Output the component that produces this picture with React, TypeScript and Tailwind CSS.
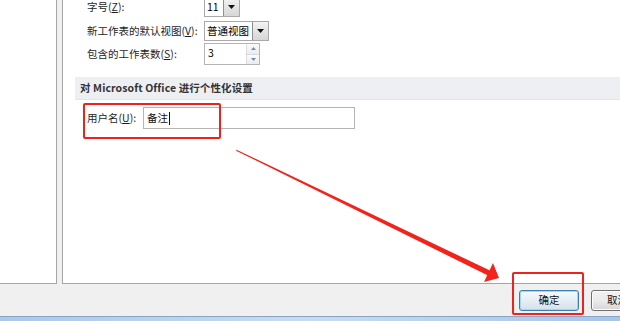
import React from "react";

const cjk = { fontFamily: '"Noto Sans CJK SC", "Microsoft YaHei", sans-serif' };

function DropArrow() {
  return (
    <div className="w-[16px] h-full border-l border-[#8f8f8f] bg-gradient-to-b from-[#f3f3f3] to-[#d6d6d6] flex items-center justify-center">
      <svg width="7" height="4" viewBox="0 0 7 4">
        <path d="M0 0H7L3.5 4Z" fill="#111" />
      </svg>
    </div>
  );
}

function Row({ label, children }: { label: React.ReactNode; children: React.ReactNode }) {
  return (
    <div className="flex items-center">
      <span className="w-[117px] text-[10.5px] text-[#1e1e1e] leading-none whitespace-nowrap">{label}</span>
      {children}
    </div>
  );
}

export default function App() {
  return (
    <div className="relative w-[620px] h-[321px] bg-[#f0f0f0] flex flex-col overflow-hidden" style={cjk}>
      <div className="flex h-[284px] gap-[5px]">
        {/* left list pane */}
        <div className="w-[57px] bg-white border-r border-b border-[#a5a5a5]" />

        {/* options pane */}
        <div className="flex-1 bg-white border-l border-b border-[#a5a5a5] flex flex-col">
          <div className="pl-[24px] flex flex-col mt-[-3px]">
            <Row label={<>字号(<u>Z</u>):</>}>
              <div className="w-[36px] h-[20px] border border-[#a9a9a9] flex bg-white">
                <span className="flex-1 pl-[2px] text-[10.5px] leading-[18px]">11</span>
                <DropArrow />
              </div>
            </Row>
            <div className="mt-[4px]">
              <Row label={<>新工作表的默认视图(<u>V</u>):</>}>
                <div className="w-[65px] h-[20px] border border-[#a9a9a9] flex bg-white">
                  <span className="flex-1 pl-[2px] text-[10.5px] leading-[18px] whitespace-nowrap">普通视图</span>
                  <DropArrow />
                </div>
              </Row>
            </div>
            <div className="mt-[2px]">
              <Row label={<>包含的工作表数(<u>S</u>):</>}>
                <div className="w-[56px] h-[22px] border border-[#b5b5b5] flex bg-white">
                  <span className="flex-1 pl-[3px] text-[10.5px] leading-[18px]">3</span>
                  <div className="w-[13px] flex flex-col border-l border-[#dcdcdc]">
                    <div className="flex-1 flex items-center justify-center bg-gradient-to-b from-[#fbfbfb] to-[#ececec] border-b border-[#d8d8d8]">
                      <svg width="5" height="3" viewBox="0 0 5 3"><path d="M0 3H5L2.5 0Z" fill="#6b8fb8" /></svg>
                    </div>
                    <div className="flex-1 flex items-center justify-center bg-gradient-to-b from-[#fbfbfb] to-[#ececec]">
                      <svg width="5" height="3" viewBox="0 0 5 3"><path d="M0 0H5L2.5 3Z" fill="#6b8fb8" /></svg>
                    </div>
                  </div>
                </div>
              </Row>
            </div>
          </div>

          <div className="ml-[12px] mt-[12px] h-[23px] bg-[#eeeff3] border-b border-[#e3e4ea] flex items-center pl-[5px]">
            <span className="text-[10.5px] font-bold text-[#333] whitespace-nowrap tracking-[0.1px]">对 Microsoft Office 进行个性化设置</span>
          </div>

          <div className="pl-[24px] mt-[7px] flex items-center">
            <span className="w-[56px] text-[10.5px] text-[#1e1e1e] whitespace-nowrap">用户名(<u>U</u>):</span>
            <div className="w-[212px] h-[22px] border border-[#b5b5b5] flex items-center pl-[3px] bg-white">
              <span className="text-[10.5px] text-[#111]">备注</span>
              <span className="w-px h-[13px] bg-[#111] ml-[1px]" />
            </div>
          </div>
        </div>
      </div>

      {/* button bar */}
      <div className="h-[32px] flex items-center pl-[519px] gap-[12px]">
        <button className="w-[60px] h-[21px] rounded-[3px] border border-[#3c7fb1] bg-gradient-to-b from-[#f4f9fd] via-[#e6eef5] to-[#d5e0ea] shadow-[inset_0_0_0_1px_#9fd8f5] text-[10.5px] text-[#111] shrink-0">
          确定
        </button>
        <button className="w-[60px] h-[21px] rounded-[3px] border border-[#707070] bg-gradient-to-b from-[#f2f2f2] via-[#ebebeb] to-[#d6d6d6] shadow-[inset_0_0_0_1px_#fcfcfc] text-[10.5px] text-[#111] shrink-0 text-left pl-[15px]">
          取消
        </button>
      </div>

      {/* window frame strip */}
      <div className="h-[5px] border-t border-[#8aa5c4] bg-gradient-to-r from-[#a9c9ec] via-[#c6dcf3] to-[#a5c6ea]" />

      {/* annotations */}
      <div className="absolute left-[83px] top-[103px] w-[138px] h-[36px] border-2 border-[#f0201a] rounded-[2px]" />
      <div className="absolute left-[512px] top-[272px] w-[72px] h-[43px] border-2 border-[#f0201a] rounded-[2px]" />
      <svg className="absolute left-0 top-0" width="620" height="321" viewBox="0 0 620 321">
        <polygon points="236,149.5 236.6,151 489,276 491,271" fill="#f2231a" />
        <polygon points="499,278 493,263 484,282" fill="#f2231a" />
      </svg>
    </div>
  );
}
